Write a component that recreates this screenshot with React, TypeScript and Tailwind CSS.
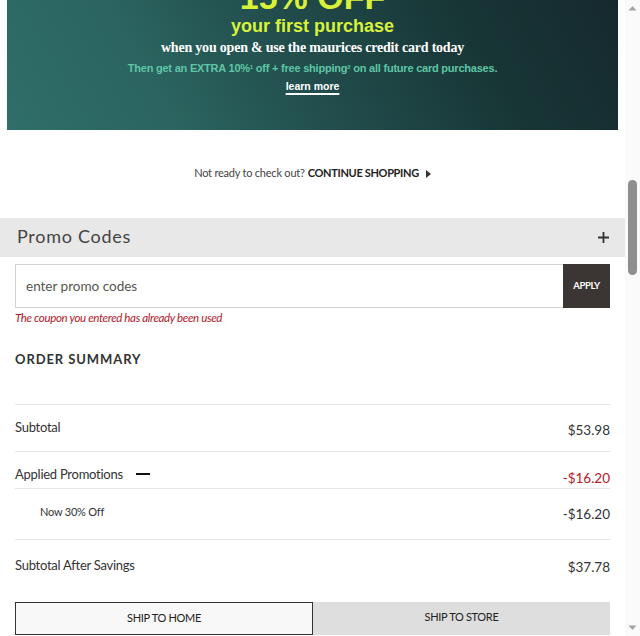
import React from 'react'

const LATO = { fontFamily: 'Lato, "Open Sans", sans-serif' }

type Row = {
  label: string
  value: string
  rowClass: string
  labelClass: string
  valueClass: string
  extra?: React.ReactNode
}

const ROWS: Row[] = [
  {
    label: 'Subtotal',
    value: '$53.98',
    rowClass: 'h-[47px] items-center border-b border-[#e6e6e6]',
    labelClass: 'text-[13px] text-[#333] pb-[3px]',
    valueClass: 'text-[13.5px] text-[#333] pt-[3px]',
  },
  {
    label: 'Applied Promotions',
    value: '-$16.20',
    rowClass: 'h-[37px] items-end border-b border-[#e6e6e6]',
    labelClass: 'text-[13px] text-[#333] pb-[6px]',
    valueClass: 'text-[13.5px] text-[#b3202a] pb-[2px]',
    extra: <span className="ml-[13px] inline-block w-[14px] h-[2px] bg-[#111] align-middle mb-[3px]" />,
  },
  {
    label: 'Now 30% Off',
    value: '-$16.20',
    rowClass: 'h-[51px] items-center border-b border-[#e6e6e6] pl-[25px]',
    labelClass: 'text-[11px] text-[#333] pb-[5px]',
    valueClass: 'text-[13.5px] text-[#333]',
  },
  {
    label: 'Subtotal After Savings',
    value: '$37.78',
    rowClass: 'h-[51px] items-center',
    labelClass: 'text-[13px] text-[#333] pb-[2px]',
    valueClass: 'text-[13.5px] text-[#333] pt-[2px]',
  },
]

function Banner() {
  return (
    <div className="mx-[7px] h-[130px] overflow-hidden flex flex-col items-center justify-end pb-[37px] bg-[linear-gradient(60deg,#2f6e69_0%,#2b6460_25%,#214c4b_50%,#183636_75%,#16292e_100%)]">
      <div
        className="text-[34px] leading-[34px] font-bold text-[#d8f23a] mb-[1px]"
        style={{ fontFamily: '"Liberation Sans", Arial, sans-serif' }}
      >
        15% OFF
      </div>
      <div
        className="text-[18px] leading-[22px] font-bold text-[#d8f23a] mb-[1px]"
        style={{ fontFamily: '"Liberation Sans", Arial, sans-serif' }}
      >
        your first purchase
      </div>
      <div
        className="text-[14px] leading-[20px] font-bold text-white tracking-[-0.015em] mb-[1px]"
        style={{ fontFamily: '"Liberation Serif", "Times New Roman", serif' }}
      >
        when you open &amp; use the maurices credit card today
      </div>
      <div
        className="text-[11px] leading-[18px] font-bold text-[#5ec6a6] tracking-[-0.02em]"
        style={{ fontFamily: '"Liberation Sans", Arial, sans-serif' }}
      >
        Then get an EXTRA 10%<sup className="text-[6px]">1</sup> off + free shipping<sup className="text-[6px]">2</sup> on all future card purchases.
      </div>
      <div
        className="text-[10.5px] leading-[14px] font-bold text-white underline underline-offset-[3px] decoration-[1.5px] mt-[2px]"
        style={{ fontFamily: '"Liberation Sans", Arial, sans-serif' }}
      >
        learn more
      </div>
    </div>
  )
}

function Scrollbar() {
  return (
    <div className="w-[15px] h-full bg-[#fafafa] flex flex-col items-center justify-between py-[5px]">
      <svg width="9" height="6" viewBox="0 0 9 6"><path d="M0.5 5.5 L4.5 1 L8.5 5.5 Z" fill="#a3a3a3" /></svg>
      <div className="flex-1 w-full flex flex-col items-center">
        <div className="mt-[169px] w-[9px] h-[95px] rounded-full bg-[#8e8e8e]" />
      </div>
      <svg width="9" height="6" viewBox="0 0 9 6"><path d="M0.5 0.5 L8.5 0.5 L4.5 5 Z" fill="#a3a3a3" /></svg>
    </div>
  )
}

export default function App() {
  return (
    <div className="w-[640px] h-[636px] overflow-hidden flex bg-white" style={LATO}>
      <div className="w-[625px] h-full flex flex-col">
        <Banner />

        {/* Continue shopping */}
        <div className="h-[88px] flex items-center justify-center pb-[1px]">
          <span className="text-[11px] text-[#444] tracking-[-0.02em]">Not ready to check out? </span>
          <span className="ml-[3px] text-[11px] font-bold text-[#222] tracking-[-0.03em]">CONTINUE SHOPPING</span>
          <svg className="ml-[7px]" width="5" height="8" viewBox="0 0 5 8"><path d="M0 0 L5 4 L0 8 Z" fill="#333" /></svg>
        </div>

        {/* Promo codes header */}
        <div className="h-[39px] bg-[#e8e8e8] flex items-center justify-between pl-[17px] pr-[16px]">
          <span className="text-[18px] text-[#444] tracking-[0.04em] pb-[2px]">Promo Codes</span>
          <svg width="11" height="11" viewBox="0 0 11 11">
            <path d="M5.5 0 V11 M0 5.5 H11" stroke="#333" strokeWidth="1.8" />
          </svg>
        </div>

        {/* Promo input */}
        <div className="mx-[15px] mt-[7px] h-[44px] flex">
          <div className="flex-1 border border-[#d2d2d2] border-r-0 flex items-center pl-[10px]">
            <span className="text-[13.5px] text-[#555]">enter promo codes</span>
          </div>
          <div className="w-[47px] bg-[#3b3533] flex items-center justify-center">
            <span className="text-[9.5px] font-bold text-white tracking-[-0.04em]">APPLY</span>
          </div>
        </div>
        <div className="mx-[15px] mt-[3px] text-[11.5px] leading-[14px] italic text-[#b0182a] tracking-[-0.03em]">
          The coupon you entered has already been used
        </div>

        {/* Order summary */}
        <div className="mx-[15px] mt-[25px] text-[13px] leading-[18px] font-bold text-[#333] tracking-[0.07em]">
          ORDER SUMMARY
        </div>

        <div className="mx-[15px] mt-[36px] border-t border-[#e6e6e6] flex flex-col">
          {ROWS.map((r) => (
            <div key={r.label} className={`flex justify-between ${r.rowClass}`}>
              <span className={`leading-[16px] tracking-[-0.02em] ${r.labelClass}`}>
                {r.label}
                {r.extra}
              </span>
              <span className={`leading-[16px] ${r.valueClass}`}>{r.value}</span>
            </div>
          ))}
        </div>

        {/* Shipping tabs */}
        <div className="mx-[15px] mt-[11px] h-[33px] flex">
          <div className="w-[298px] border border-[#333] bg-[#f8f8f8] flex items-center justify-center">
            <span className="text-[11px] text-[#222] tracking-[-0.03em]">SHIP TO HOME</span>
          </div>
          <div className="flex-1 bg-[#dedede] flex items-center justify-center pb-[2px]">
            <span className="text-[11px] text-[#222] tracking-[-0.03em]">SHIP TO STORE</span>
          </div>
        </div>
      </div>
      <Scrollbar />
    </div>
  )
}
